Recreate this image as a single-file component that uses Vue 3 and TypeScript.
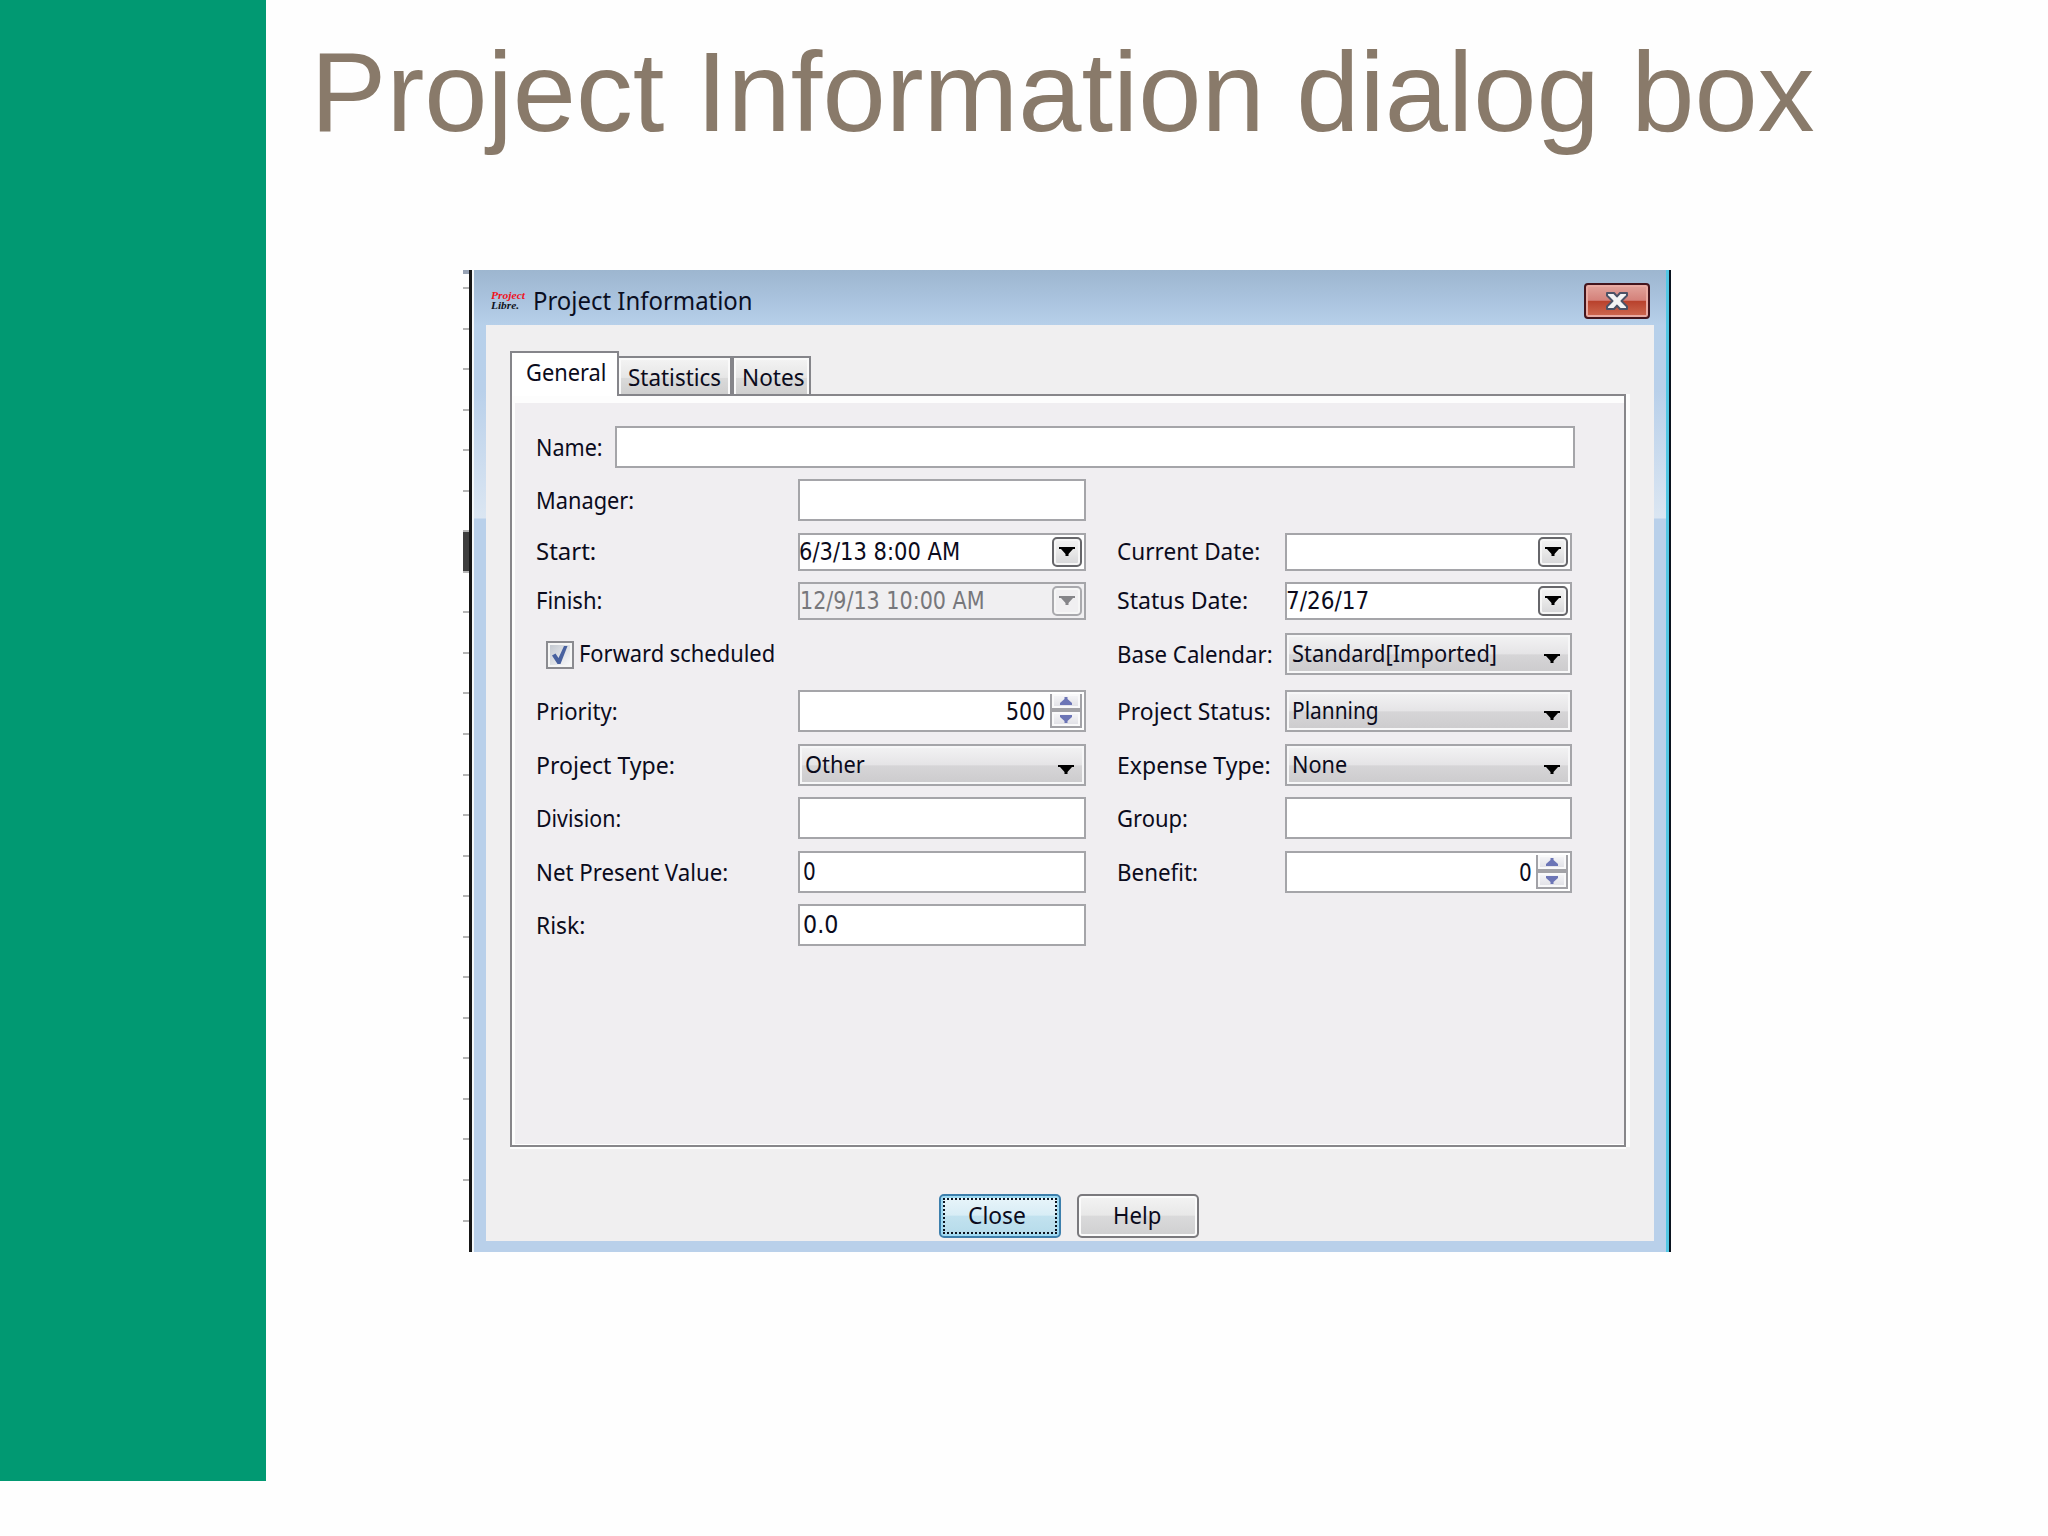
<script setup lang="ts">
import type { Directive } from 'vue'

type Kind = 'text' | 'date' | 'combo' | 'spin'

interface Field {
  label: string
  labelWidth: number
  kind: Kind
  value?: string
  valueWidth?: number
  disabled?: boolean
}

interface Row {
  height: number
  left?: Field
  right?: Field
  checkbox?: boolean
}

/* Condenses a run of text to the given advance width. */
const vFit: Directive<HTMLElement, number | undefined> = {
  mounted(el, binding) {
    if (!binding.value) return
    const natural = el.offsetWidth
    if (natural > 0) el.style.transform = `scaleX(${binding.value / natural})`
  },
}

const tabs = [
  { name: 'Statistics', width: 93.5 },
  { name: 'Notes', width: 62 },
]

const rows: Row[] = [
  { height: 54, left: { label: 'Manager:', labelWidth: 98, kind: 'text' } },
  {
    height: 49,
    left: { label: 'Start:', labelWidth: 60, kind: 'date', value: '6/3/13 8:00 AM', valueWidth: 161 },
    right: { label: 'Current Date:', labelWidth: 143, kind: 'date' },
  },
  {
    height: 51,
    left: { label: 'Finish:', labelWidth: 66, kind: 'date', value: '12/9/13 10:00 AM', valueWidth: 185, disabled: true },
    right: { label: 'Status Date:', labelWidth: 131, kind: 'date', value: '7/26/17', valueWidth: 83 },
  },
  {
    height: 57,
    checkbox: true,
    right: { label: 'Base Calendar:', labelWidth: 155.5, kind: 'combo', value: 'Standard[Imported]', valueWidth: 205 },
  },
  {
    height: 54,
    left: { label: 'Priority:', labelWidth: 82, kind: 'spin', value: '500', valueWidth: 39 },
    right: { label: 'Project Status:', labelWidth: 153.5, kind: 'combo', value: 'Planning', valueWidth: 87 },
  },
  {
    height: 53,
    left: { label: 'Project Type:', labelWidth: 138.5, kind: 'combo', value: 'Other', valueWidth: 60 },
    right: { label: 'Expense Type:', labelWidth: 153.5, kind: 'combo', value: 'None', valueWidth: 55 },
  },
  {
    height: 54,
    left: { label: 'Division:', labelWidth: 85.5, kind: 'text' },
    right: { label: 'Group:', labelWidth: 70.5, kind: 'text' },
  },
  {
    height: 53,
    left: { label: 'Net Present Value:', labelWidth: 192, kind: 'text', value: '0', valueWidth: 13 },
    right: { label: 'Benefit:', labelWidth: 81, kind: 'spin', value: '0', valueWidth: 13 },
  },
  { height: 43, left: { label: 'Risk:', labelWidth: 49.5, kind: 'text', value: '0.0', valueWidth: 35 } },
]

const ticks = Array.from({ length: 24 }, (_, i) => i)
</script>

<template>
  <main class="slide">
    <aside class="band"></aside>
    <section class="body">
      <h1>Project Information dialog box</h1>

      <div class="capture">
        <div class="ruler">
          <i v-for="t in ticks" :key="t"></i>
          <b class="marker"></b>
        </div>

        <div class="window">
          <header class="titlebar">
            <svg class="logo" width="36" height="20" viewBox="0 0 36 20">
              <text x="0" y="8" textLength="34" lengthAdjust="spacingAndGlyphs" fill="#f0121c">Project</text>
              <text x="0" y="18" textLength="28" lengthAdjust="spacingAndGlyphs" fill="#10131c">Libre.</text>
            </svg>
            <span v-fit="220" class="t caption">Project Information</span>
            <button class="x" type="button">
              <svg width="24" height="20" viewBox="0 0 24 20">
                <path
                  d="M2 2H9L12 5.4L15 2H22V4.5L16.5 10L22 15.500V18H15L12 14.600L9 18H2V15.500L7.500 10L2 4.500Z"
                  fill="#f4f4f4" stroke="#4c5266" stroke-width="2" stroke-linejoin="round"
                />
              </svg>
            </button>
          </header>

          <div class="client">
            <nav class="tabs">
              <div class="tab active"><span v-fit="80" class="t">General</span></div>
              <div v-for="tab in tabs" :key="tab.name" class="tab" :class="tab.name.toLowerCase()">
                <span v-fit="tab.width" class="t">{{ tab.name }}</span>
              </div>
            </nav>

            <div class="pane">
              <div class="row name-row">
                <div class="label tall"><span v-fit="66.500" class="t">Name:</span></div>
                <div class="field text"></div>
              </div>

              <div v-for="(row, i) in rows" :key="i" class="row" :style="{ height: row.height + 'px' }">
                <label v-if="row.checkbox" class="check">
                  <svg width="28" height="28" viewBox="0 0 28 28">
                    <defs>
                      <linearGradient id="box" x1="0" y1="0" x2="1" y2="1">
                        <stop offset="0" stop-color="#c3c8d0" />
                        <stop offset="1" stop-color="#f8f8fa" />
                      </linearGradient>
                    </defs>
                    <rect x="1" y="1" width="26" height="26" fill="#f6f6f6" stroke="#8b8b90" stroke-width="2" />
                    <rect x="4" y="4" width="20" height="20" fill="url(#box)" />
                    <path d="M6 14.500L9.500 12.500L12.500 17L18 5H21.500L14.500 23H11.500Z" fill="#47609f" />
                  </svg>
                  <span v-fit="196" class="t">Forward scheduled</span>
                </label>

                <template v-for="side in (['left', 'right'] as const)" :key="side">
                  <div v-if="row[side]" class="cell" :class="side">
                    <div class="label" :class="{ tall: row[side]!.kind !== 'date' }">
                      <span v-fit="row[side]!.labelWidth" class="t">{{ row[side]!.label }}</span>
                    </div>
                    <div class="field" :class="[row[side]!.kind, { disabled: row[side]!.disabled }]">
                      <span
                        v-if="row[side]!.value"
                        v-fit="row[side]!.valueWidth"
                        class="t"
                        :class="{ num: row[side]!.kind !== 'combo' }"
                      >{{ row[side]!.value }}</span>
                      <span v-if="row[side]!.kind === 'date'" class="drop">
                        <svg width="16" height="10" viewBox="0 0 16 10"><path d="M0 0H16V2H14L9.500 7V9H6.500V7L2 2H0Z" /></svg>
                      </span>
                      <svg v-if="row[side]!.kind === 'combo'" class="arrow" width="16" height="10" viewBox="0 0 16 10">
                        <path d="M0 0H16V2H14L9.500 7V9H6.500V7L2 2H0Z" />
                      </svg>
                      <span v-if="row[side]!.kind === 'spin'" class="spinner">
                        <span><svg width="12" height="8" viewBox="0 0 12 8"><path d="M0 8V6L4.500 2V0H7.500V2L12 6V8Z" /></svg></span>
                        <span><svg width="12" height="8" viewBox="0 0 12 8"><path d="M0 0V2L4.500 6V8H7.500V6L12 2V0Z" /></svg></span>
                      </span>
                    </div>
                  </div>
                </template>
              </div>
            </div>

            <footer class="actions">
              <button class="btn primary" type="button"><span v-fit="58" class="t">Close</span></button>
              <button class="btn" type="button"><span v-fit="48" class="t">Help</span></button>
            </footer>
          </div>
        </div>
      </div>
    </section>
  </main>
</template>

<style>
body {
  background: #fefefe;
}
</style>

<style scoped>
* {
  box-sizing: border-box;
}
.slide {
  display: flex;
  width: 2048px;
  height: 1536px;
  overflow: hidden;
  background: #fefefe;
}
.band {
  flex: none;
  width: 265.6px;
  height: 1480.6px;
  background: #019972;
}
.body {
  flex: 1;
}
h1 {
  margin: 26px 0 0 45px;
  height: 244px;
  font: 400 113.700px/132px "Liberation Sans", Arial, sans-serif;
  color: #897a6a;
  white-space: nowrap;
}
.capture {
  display: flex;
  width: 1208px;
  height: 982px;
  margin-left: 197.400px;
  font: 24px/30px "Noto Sans", Tahoma, sans-serif;
  color: #0b0b1c;
}
.t {
  display: inline-block;
  flex: none;
  white-space: nowrap;
  transform-origin: 0 50%;
}
.num {
  font-family: "DejaVu Sans Condensed", "DejaVu Sans", sans-serif;
  font-stretch: condensed;
}

/* Edge of the sheet behind the window */
.ruler {
  position: relative;
  flex: none;
  width: 6px;
  padding-top: 17px;
  background: linear-gradient(#98a3b5 0 4px, transparent 4px);
}
.ruler i {
  display: block;
  height: 2px;
  margin-bottom: 38.560px;
  background: #b4b4b4;
}
.marker {
  position: absolute;
  left: 0;
  top: 262px;
  width: 6px;
  height: 39px;
  background: #3d3d3d;
}

.window {
  flex: none;
  width: 1202px;
  padding: 0 17px 0 14px;
  border-left: 3px solid #161616;
  box-shadow: inset 2px 0 #f4f8fa, inset -2px 0 #0b1420, inset -5px 0 #52c7e4;
  background: linear-gradient(#9db6cf 0, #a8c1dc 25px, #b7d0ea 56px, #b9d0ea 120px, #dbe6f2 248px, #b9d0ea 249px);
}
.titlebar {
  display: flex;
  height: 55px;
  align-items: flex-start;
}
.logo {
  flex: none;
  margin: 21px 0 0 5px;
  font: italic 700 10px "Liberation Serif", serif;
}
.caption {
  margin: 14px 0 0 6.500px;
  font-size: 25px;
  line-height: 32px;
  color: #0a0e22;
}
.x {
  display: flex;
  align-items: center;
  justify-content: center;
  width: 66px;
  height: 36px;
  margin: 13px 4px 0 auto;
  padding: 0;
  border: 2px solid #43151d;
  border-radius: 4px;
  box-shadow: inset 0 0 0 2px #e9aaa2;
  background: linear-gradient(#e2a49c, #d4817a 48%, #b8412c 50%, #cf6a52);
}

.client {
  height: 916px;
  padding: 26px 24px 0;
  background: #f0eff0;
}
.tabs {
  position: relative;
  z-index: 1;
  display: flex;
  align-items: flex-end;
  height: 45px;
}
.tab {
  display: flex;
  height: 40px;
  padding: 4px 0 0 9px;
  border: 2px solid #85858a;
  box-shadow: inset 2px 2px #fafafa, inset -2px 0 #fafafa;
  background: linear-gradient(#f4f4f4, #e6e6e6 54%, #dadada 56%, #cfcfcf);
}
.tab.active {
  width: 109px;
  height: 45px;
  padding: 4px 0 0 14px;
  border-bottom: 0;
  box-shadow: none;
  background: #fff;
}
.tab.statistics {
  width: 115px;
  margin-left: -2px;
}
.tab.notes {
  width: 80px;
  border-left-width: 3px;
  margin-left: -1px;
  padding-left: 8px;
}
.pane {
  width: 1116px;
  height: 753px;
  margin-top: -2px;
  padding: 30px 0 0 24px;
  border: 2px solid #87868a;
  background: #f0eef1;
  box-shadow: inset 0 7px #fdfdfd, inset 3px 0 #fdfdfd, inset 0 -1px #fff, 4px 0 #fdfdfd, 0 2px #fdfdfd;
}
.row {
  display: flex;
}
.name-row {
  height: 53px;
}
.name-row .label {
  width: 79px;
}
.name-row .field {
  width: 960px;
}
.label {
  height: 38px;
  padding-top: 3px;
}
.label.tall {
  height: 42px;
  padding-top: 6px;
}
.cell {
  display: flex;
}
.cell.left .label {
  width: 262.500px;
}
.cell.right {
  margin-left: auto;
  margin-right: 51.500px;
}
.cell.right .label {
  width: 168px;
}
.field {
  display: flex;
  width: 287.500px;
  height: 42px;
  padding: 4px 0 0 3px;
  border: 2px solid #a5a5a9;
  background: #fff;
}
.field.date {
  position: relative;
  height: 38px;
  padding: 2px 2px 0 0;
}
.field.date .t {
  margin-left: -1px;
}
.field.disabled {
  padding-left: 1px;
  color: #77777b;
  background: #f0eff1;
}
.field.combo {
  padding: 3px 10px 0 5px;
  box-shadow: inset 0 0 0 2px #f7f7f8;
  background: linear-gradient(#f3f3f4, #e5e4e6 50%, #d6d5d7 52%, #cccbcd);
}
.field.spin {
  justify-content: flex-end;
  padding: 5px 2px 0 0;
}
.field.spin .t {
  margin-right: 5px;
  transform-origin: 100% 50%;
}
.drop {
  position: absolute;
  top: 2px;
  right: 2px;
  display: flex;
  align-items: center;
  justify-content: center;
  width: 30px;
  height: 30px;
  border: 2px solid #66666a;
  border-radius: 5px;
  box-shadow: inset 0 0 0 2px #f6f6f6;
  background: linear-gradient(#f2f2f2, #e8e8e8 50%, #d6d6d8);
}
.disabled .drop {
  border-color: #a9a9ad;
  background: #f0eff1;
}
.disabled .drop path {
  fill: #858589;
}
.arrow {
  margin: 16px 0 0 auto;
}
.spinner {
  display: flex;
  flex-direction: column;
  justify-content: space-between;
  width: 32px;
  height: 34px;
  margin-top: -3px;
}
.spinner > span {
  display: flex;
  align-items: center;
  justify-content: center;
  height: 16px;
  border: solid #a2a2a7;
  border-width: 0 2px 2px;
  background: linear-gradient(#f7f7f9, #dfdfe5);
  box-shadow: inset 0 0 0 2px #f9f9fa;
}
.spinner > span:last-child {
  height: 18px;
  border-width: 2px;
}
.spinner path {
  fill: #6c75b6;
}
.check {
  display: flex;
  align-items: flex-start;
  height: 42px;
  padding: 8px 0 0 10px;
}
.check .t {
  margin: -3px 0 0 5.500px;
}

.actions {
  display: flex;
  justify-content: center;
  gap: 16px;
  margin: 47px 0 0 -1px;
}
.btn {
  display: flex;
  width: 122px;
  height: 44px;
  margin: 0;
  padding: 4px 0 0 34px;
  border: 2px solid #7a797d;
  border-radius: 5px;
  box-shadow: inset 0 0 0 2px #fbfbfb;
  background: linear-gradient(#f3f3f3, #e8e8e8 48%, #dadadb 50%, #cfcfd0);
  font: inherit;
  color: inherit;
}
.btn.primary {
  position: relative;
  padding-left: 27px;
  border-color: #3d7fac;
  box-shadow: inset 0 0 0 2px #9fdaf2;
  background: linear-gradient(#e9f5fa, #d8edf6 48%, #c2e2ef 50%, #b5dbea);
}
.btn.primary::after {
  content: "";
  position: absolute;
  inset: 2px;
  border: 2px dotted #0b1420;
}
</style>
